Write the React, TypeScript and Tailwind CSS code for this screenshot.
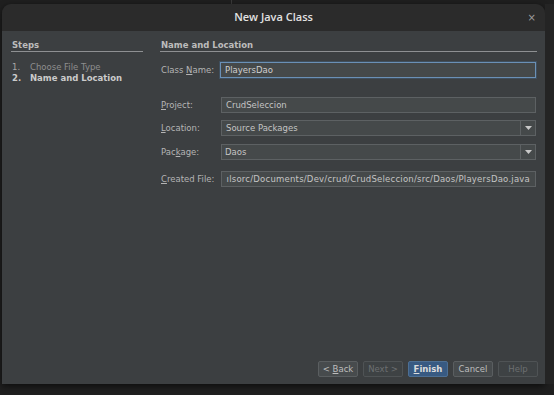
import React from "react";

const fieldBox =
  "h-[16px] w-[315px] flex items-center border border-[#5d6163] bg-[#45494a] text-[#c4c4c4] overflow-hidden whitespace-nowrap";

function Label({ pre, mn, post }: { pre: string; mn: string; post: string }) {
  return (
    <div className="w-[61px] pl-[1px] text-[#b4b4b4]">
      {pre}
      <span className="underline underline-offset-[1px]">{mn}</span>
      {post}
    </div>
  );
}

function Arrow() {
  return (
    <div className="h-full w-[15px] border-l border-[#5d6163] flex items-center justify-center">
      <svg width="7" height="4" viewBox="0 0 7 4">
        <path d="M0 0H7L3.5 4Z" fill="#c8c8c8" />
      </svg>
    </div>
  );
}

function Btn({
  children,
  kind = "normal",
}: {
  children: React.ReactNode;
  kind?: "normal" | "off" | "main";
}) {
  const styles = {
    normal: "bg-[#474b4d] border-[#5a5e60] text-[#bdbdbd]",
    off: "bg-[#3e4244] border-[#4f5355] text-[#6c6f71]",
    main: "bg-[#385a82] border-[#4d6f93] text-[#dcdcdc] font-bold",
  }[kind];
  return (
    <div
      className={`h-[16px] w-[40px] flex items-center justify-center rounded-[2px] border leading-none ${styles}`}
    >
      {children}
    </div>
  );
}

export default function App() {
  return (
    <div className="w-[554px] h-[395px] overflow-hidden bg-[#1f1f1f] font-['DejaVu_Sans',sans-serif] text-[8.5px]">
      {/* sliver of the window behind */}
      <div className="h-[4px] flex">
        <div className="ml-[231px] w-[1px] h-full bg-[#3a3a3a]" />
      </div>
      <div className="flex">
        <div className="ml-[2px] w-[543px] h-[380px] flex flex-col rounded-t-[9px] overflow-hidden shadow-[0_2px_6px_rgba(0,0,0,0.6)]">
          {/* title bar */}
          <div className="h-[27px] bg-[#2b2b2b] flex items-center relative">
            <div className="flex-1 text-center font-['Open_Sans',sans-serif] font-semibold text-[11px] text-[#e2e2e2]">
              New Java Class
            </div>
            <div className="absolute right-[9px] top-[9px] text-[10px] leading-none text-[#9c9c9c]">×</div>
          </div>

          {/* body */}
          <div className="flex-1 bg-[#3c3f41] flex flex-col">
            <div className="flex-1 flex pl-[9px] pt-[9px] pr-[8px]">
              {/* steps */}
              <div className="w-[132px]">
                <div className="leading-[11px] font-bold text-[#bcbcbc] border-b border-[#8e9092] pl-[1px]">
                  Steps
                </div>
                <div className="mt-[10px] leading-[11px]">
                  <div className="flex">
                    <span className="w-[19px] pl-[1px] text-[#a6a6a6]">1.</span>
                    <span className="text-[#8e8e8e]">Choose File Type</span>
                  </div>
                  <div className="flex font-bold text-[#cbcbcb]">
                    <span className="w-[19px] pl-[1px]">2.</span>
                    <span>Name and Location</span>
                  </div>
                </div>
              </div>

              {/* form */}
              <div className="ml-[17px] w-[377px]">
                <div className="leading-[11px] font-bold text-[#bcbcbc] border-b border-[#8e9092] pl-[1px]">
                  Name and Location
                </div>

                <div className="mt-[10px] flex items-center">
                  <Label pre="Class " mn="N" post="ame:" />
                  <div className="h-[16px] w-[316px] -ml-[1px] flex items-center border border-[#6a90b6] bg-[#45494a] text-[#cfcfcf] pl-[4px] shadow-[0_0_0_1px_rgba(70,110,150,0.35)]">
                    PlayersDao
                  </div>
                </div>

                <div className="mt-[19px] flex items-center">
                  <Label pre="" mn="P" post="roject:" />
                  <div className={`${fieldBox} pl-[4px]`}>CrudSeleccion</div>
                </div>

                <div className="mt-[7px] flex items-center">
                  <Label pre="" mn="L" post="ocation:" />
                  <div className={fieldBox}>
                    <div className="flex-1 pl-[4px]">Source Packages</div>
                    <Arrow />
                  </div>
                </div>

                <div className="mt-[8px] flex items-center">
                  <Label pre="Pac" mn="k" post="age:" />
                  <div className={fieldBox}>
                    <div className="flex-1 pl-[3px]">Daos</div>
                    <Arrow />
                  </div>
                </div>

                <div className="mt-[11px] flex items-center">
                  <Label pre="" mn="C" post="reated File:" />
                  <div className={`${fieldBox} justify-end pr-[5px]`}>
                    <span className="tracking-[0.22px]">ılsorc/Documents/Dev/crud/CrudSeleccion/src/Daos/PlayersDao.java</span>
                  </div>
                </div>
              </div>
            </div>

            {/* buttons */}
            <div className="flex justify-end gap-[5px] pr-[7px] pb-[7px]">
              <Btn>
                &lt;&nbsp;<span className="underline">B</span>ack
              </Btn>
              <Btn kind="off">Next &gt;</Btn>
              <Btn kind="main">
                <span className="underline">F</span>inish
              </Btn>
              <Btn>Cancel</Btn>
              <Btn kind="off">Help</Btn>
            </div>
          </div>
        </div>
        <div className="flex-1 h-[380px] bg-[#242424]" />
      </div>
    </div>
  );
}
